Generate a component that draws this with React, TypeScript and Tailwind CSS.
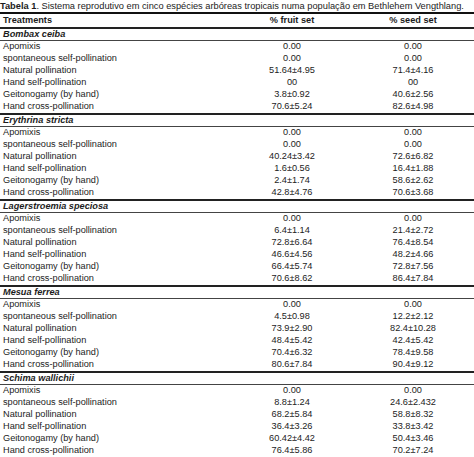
const sections = [
  {
    name: "Bombax ceiba",
    rows: [
      ["Apomixis", "0.00", "0.00"],
      ["spontaneous self-pollination", "0.00", "0.00"],
      ["Natural pollination", "51.64±4.95", "71.4±4.16"],
      ["Hand self-pollination", "00", "00"],
      ["Geitonogamy (by hand)", "3.8±0.92", "40.6±2.56"],
      ["Hand cross-pollination", "70.6±5.24", "82.6±4.98"],
    ],
  },
  {
    name: "Erythrina stricta",
    rows: [
      ["Apomixis", "0.00", "0.00"],
      ["spontaneous self-pollination", "0.00", "0.00"],
      ["Natural pollination", "40.24±3.42", "72.6±6.82"],
      ["Hand self-pollination", "1.6±0.56", "16.4±1.88"],
      ["Geitonogamy (by hand)", "2.4±1.74", "58.6±2.62"],
      ["Hand cross-pollination", "42.8±4.76", "70.6±3.68"],
    ],
  },
  {
    name: "Lagerstroemia speciosa",
    rows: [
      ["Apomixis", "0.00", "0.00"],
      ["spontaneous self-pollination", "6.4±1.14", "21.4±2.72"],
      ["Natural pollination", "72.8±6.64", "76.4±8.54"],
      ["Hand self-pollination", "46.6±4.56", "48.2±4.66"],
      ["Geitonogamy (by hand)", "66.4±5.74", "72.8±7.56"],
      ["Hand cross-pollination", "70.6±8.62", "86.4±7.84"],
    ],
  },
  {
    name: "Mesua ferrea",
    rows: [
      ["Apomixis", "0.00", "0.00"],
      ["spontaneous self-pollination", "4.5±0.98", "12.2±2.12"],
      ["Natural pollination", "73.9±2.90", "82.4±10.28"],
      ["Hand self-pollination", "48.4±5.42", "42.4±5.42"],
      ["Geitonogamy (by hand)", "70.4±6.32", "78.4±9.58"],
      ["Hand cross-pollination", "80.6±7.84", "90.4±9.12"],
    ],
  },
  {
    name: "Schima wallichii",
    rows: [
      ["Apomixis", "0.00", "0.00"],
      ["spontaneous self-pollination", "8.8±1.24", "24.6±2.432"],
      ["Natural pollination", "68.2±5.84", "58.8±8.32"],
      ["Hand self-pollination", "36.4±3.26", "33.8±3.42"],
      ["Geitonogamy (by hand)", "60.42±4.42", "50.4±3.46"],
      ["Hand cross-pollination", "76.4±5.86", "70.2±7.24"],
    ],
  },
]

function Row({ cells }: { cells: string[] }) {
  return (
    <div className="flex h-[12px] items-center leading-none">
      <div className="flex-1 pl-[3px]">{cells[0]}</div>
      <div className="w-[120px] text-center">{cells[1]}</div>
      <div className="w-[122px] text-center">{cells[2]}</div>
    </div>
  )
}

export default function App() {
  return (
    <div className="w-[474px] h-[457px] overflow-hidden bg-white text-[#1c1c1c] font-['Liberation_Sans',Arial,sans-serif]">
      <div className="h-[12px] text-[9.28px] leading-[12px] whitespace-nowrap">
        <b>Tabela 1</b>. Sistema reprodutivo em cinco espécies arbóreas tropicais numa população em Bethlehem Vengthlang.
      </div>
      <div className="text-[9.2px] border-t-2 border-[#111]">
        <div className="flex h-[13px] items-center leading-none font-bold">
          <div className="flex-1 pl-[3px]">Treatments</div>
          <div className="w-[120px] text-center">% fruit set</div>
          <div className="w-[122px] text-center">% seed set</div>
        </div>
        {sections.map((s) => (
          <div key={s.name}>
            <div className="h-[14px] flex items-center border-t-2 border-b border-t-[#222] border-b-[#444] pl-[3px] font-bold italic leading-none">
              {s.name}
            </div>
            {s.rows.map((r) => (
              <Row key={r[0]} cells={r} />
            ))}
          </div>
        ))}
        <div className="border-t-2 border-[#111]" />
      </div>
    </div>
  )
}
